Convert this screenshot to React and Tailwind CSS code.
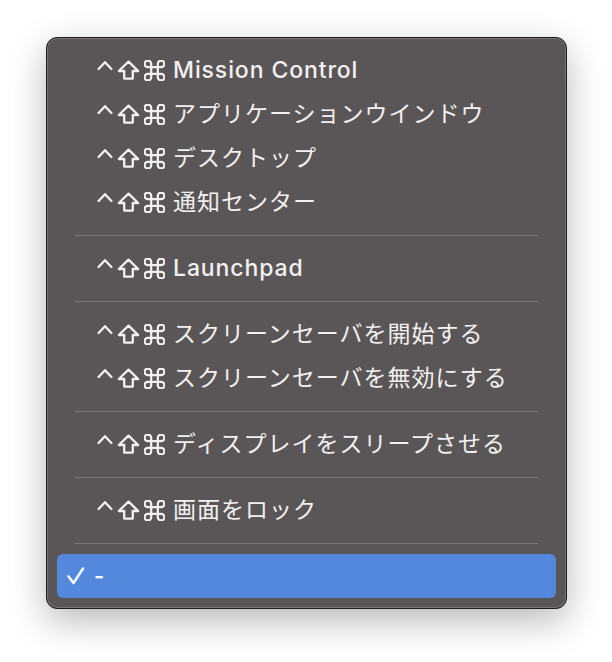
import React from "react";

const groups = [
  ["Mission Control", "アプリケーションウインドウ", "デスクトップ", "通知センター"],
  ["Launchpad"],
  ["スクリーンセーバを開始する", "スクリーンセーバを無効にする"],
  ["ディスプレイをスリープさせる"],
  ["画面をロック"],
];

// ⌃ ⇧ ⌘ drawn as small icons
function Keys() {
  return (
    <span className="flex items-center">
      <svg width="16" height="20" viewBox="0 0 16 20" fill="none">
        <path d="M1.6 9 L8 2.2 L14.4 9" stroke="#f2f0f0" strokeWidth="2.3" strokeLinecap="round" strokeLinejoin="round" />
      </svg>
      <svg className="ml-[4px]" width="23" height="20" viewBox="0 0 23 20" fill="none">
        <path d="M11.5 1.6 L21.2 11 L15.8 11 L15.8 18.6 L7.2 18.6 L7.2 11 L1.8 11 Z" stroke="#f2f0f0" strokeWidth="2.3" strokeLinejoin="round" />
      </svg>
      <svg className="ml-[4px]" width="21" height="21" viewBox="2.5 2.5 19 19" fill="none">
        <path d="M15 6v12a3 3 0 1 0 3-3H6a3 3 0 1 0 3 3V6a3 3 0 1 0-3 3h12a3 3 0 1 0-3-3" stroke="#f2f0f0" strokeWidth="2" strokeLinecap="round" strokeLinejoin="round" />
      </svg>
    </span>
  );
}

function Row({ label }) {
  const latin = /^[A-Za-z ]+$/.test(label);
  return (
    <div className="h-[44px] flex items-center pl-[50px] text-[#f2f0f0]">
      <Keys />
      <span className={latin ? "ml-[8px] text-[23px] font-medium tracking-[0.9px]" : "ml-[8px] text-[23px] font-normal tracking-[1px]"}>
        {label}
      </span>
    </div>
  );
}

function Separator() {
  return (
    <div className="h-[22px] flex items-center px-[28px]">
      <div className="h-px w-full bg-[#7b7778]" />
    </div>
  );
}

export default function App() {
  return (
    <div className="w-[612px] h-[662px] bg-white pt-[37px] pl-[46px] font-['Inter','Noto_Sans_CJK_JP',sans-serif]">
      <div className="w-[521px] rounded-[11px] border border-[#1e1c1d] bg-[#5a5657] pt-[10px] pb-[10px] shadow-[inset_0_0_0_1px_rgba(255,255,255,0.18),0_12px_36px_rgba(0,0,0,0.28)]">
        {groups.map((group, i) => (
          <div key={i}>
            {group.map((label) => (
              <Row key={label} label={label} />
            ))}
            <Separator />
          </div>
        ))}
        <div className="mx-[10px] h-[44px] rounded-[6px] bg-[#5388dd] flex items-center pl-[9px] text-white">
          <svg width="20" height="20" viewBox="0 0 20 20" fill="none">
            <path d="M2.5 10.5 L7.5 17 L17 2.5" stroke="#f4f4f4" strokeWidth="2.6" strokeLinecap="round" strokeLinejoin="round" />
          </svg>
          <span className="ml-[8px] text-[22px] font-semibold">-</span>
        </div>
      </div>
    </div>
  );
}
